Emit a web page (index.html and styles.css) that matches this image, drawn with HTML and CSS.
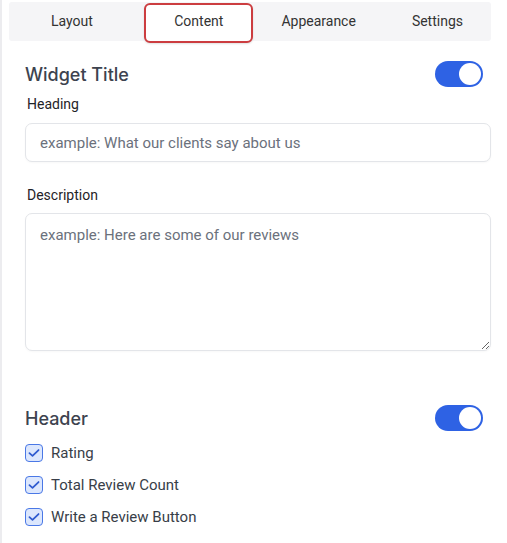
FILE: index.html
```html
<!DOCTYPE html>
<html lang="en">
<head>
<meta charset="utf-8">
<title>Widget Content</title>
<link rel="stylesheet" href="styles.css">
</head>
<body>
<div class="page">
  <nav class="tabs">
    <div class="tab tab-first">Layout</div>
    <div class="tab tab-active">Content</div>
    <div class="tab">Appearance</div>
    <div class="tab">Settings</div>
  </nav>

  <section class="panel">
    <div class="section-head">
      <h2 class="section-title">Widget Title</h2>
      <span class="toggle"><span class="knob"></span></span>
    </div>

    <label class="field-label label-heading">Heading</label>
    <input class="text-input" type="text" placeholder="example: What our clients say about us">

    <label class="field-label label-desc">Description</label>
    <textarea class="text-area" placeholder="example: Here are some of our reviews"></textarea>

    <div class="section-head header-head">
      <h2 class="section-title">Header</h2>
      <span class="toggle"><span class="knob"></span></span>
    </div>

    <ul class="checks">
      <li class="check-row"><span class="checkbox"><svg viewBox="0 0 16 16" width="14" height="14"><path d="M2.8 8.2 L6.3 11.3 L13.2 4.6" fill="none" stroke="#2f5bd0" stroke-width="2" stroke-linecap="round" stroke-linejoin="round"/></svg></span>Rating</li>
      <li class="check-row"><span class="checkbox"><svg viewBox="0 0 16 16" width="14" height="14"><path d="M2.8 8.2 L6.3 11.3 L13.2 4.6" fill="none" stroke="#2f5bd0" stroke-width="2" stroke-linecap="round" stroke-linejoin="round"/></svg></span>Total Review Count</li>
      <li class="check-row"><span class="checkbox"><svg viewBox="0 0 16 16" width="14" height="14"><path d="M2.8 8.2 L6.3 11.3 L13.2 4.6" fill="none" stroke="#2f5bd0" stroke-width="2" stroke-linecap="round" stroke-linejoin="round"/></svg></span>Write a Review Button</li>
    </ul>
  </section>
</div>
</body>
</html>
```

FILE: styles.css
```css
* { box-sizing: border-box; }

html, body {
  margin: 0;
  padding: 0;
  background: #ffffff;
}

body {
  font-family: Roboto, "Liberation Sans", sans-serif;
  color: #222;
}

.page {
  min-height: 543px;
  border-left: 2px solid #ececef;
  padding: 2px 16px 0 7px;
}

.tabs {
  display: flex;
  align-items: flex-start;
  height: 39px;
  padding: 1px 0 0 14px;
  background: #f5f5f7;
  border-radius: 3px;
}

.tab {
  height: 40px;
  padding: 0 26px 4px;
  display: flex;
  align-items: center;
  font-size: 14px;
  color: #333;
  border: 2px solid transparent;
  border-radius: 6px;
  white-space: nowrap;
}

.tab-first { margin-right: auto; }

.tab-active {
  padding: 0 28px 4px;
  background: #fff;
  border-color: #cc3d40;
  box-shadow: 0 1px 2px rgba(0,0,0,0.12);
}

.panel {
  padding: 20px 0 0 16px;
}

.section-head {
  display: flex;
  align-items: center;
  justify-content: space-between;
  height: 26px;
  padding-right: 8px;
}

.section-title {
  margin: 0;
  font-family: Inter, "Noto Sans", sans-serif;
  font-weight: 500;
  font-size: 18px;
  color: #3d434f;
}

.toggle {
  width: 48px;
  height: 26px;
  border-radius: 13px;
  background: #2e62e4;
  display: flex;
  align-items: center;
  justify-content: flex-end;
  padding: 2px;
}

.knob {
  width: 22px;
  height: 22px;
  border-radius: 50%;
  background: #fff;
}

.field-label {
  display: block;
  font-size: 14px;
  line-height: 20px;
  color: #1f2328;
  padding-left: 2px;
}

.label-heading { margin-top: 7px; }
.label-desc { margin-top: 23px; }

.text-input,
.text-area {
  display: block;
  width: 100%;
  margin-top: 9px;
  border: 1px solid #e3e5e9;
  border-radius: 7px;
  font-family: Roboto, "Liberation Sans", sans-serif;
  font-size: 15px;
  color: #222;
  background: #fff;
  box-shadow: 0 1px 2px rgba(0,0,0,0.03);
  outline: none;
}

.text-input {
  height: 39px;
  padding: 0 14px;
}

.text-area {
  height: 138px;
  margin-top: 8px;
  padding: 11px 14px;
  line-height: 20px;
  resize: vertical;
}

.text-input::placeholder,
.text-area::placeholder {
  color: #6b717c;
}

.header-head { margin-top: 54px; }

.checks {
  list-style: none;
  margin: 12px 0 0;
  padding: 0;
  display: flex;
  flex-direction: column;
  gap: 12px;
}

.check-row {
  display: flex;
  align-items: center;
  gap: 8px;
  height: 20px;
  font-size: 15px;
  color: #383e48;
}

.checkbox {
  width: 18px;
  height: 18px;
  border: 1.5px solid #4a78e6;
  border-radius: 4px;
  background: #dce7fd;
  display: flex;
  align-items: center;
  justify-content: center;
}
```
